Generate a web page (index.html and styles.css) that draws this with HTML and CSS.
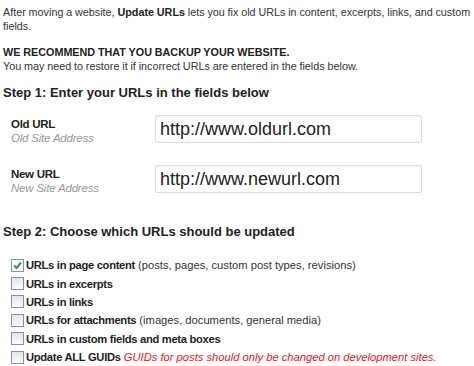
FILE: index.html
```html
<!DOCTYPE HTML>
<html lang="en">
<head>
    <title>Update URLs</title>
    <link rel="stylesheet" href="styles.css">
</head>
<body>

<div class="wrap">
    <p class="intro">After moving a website, <b>Update URLs</b> lets you fix old URLs in content, excerpts, links, and custom fields.</p>
    <p class="intro"><b>WE RECOMMEND THAT YOU BACKUP YOUR WEBSITE.</b><br>You may need to restore it if incorrect URLs are entered in the fields below.</p>

    <h3 class="step-title">Step 1: Enter your URLs in the fields below</h3>
    <div class="url-fields">
        <div class="url-row">
            <label class="url-label" for="oldurl">
                <strong>Old URL</strong>
                <em>Old Site Address</em>
            </label>
            <input type="text" id="oldurl" class="url-input" value="http://www.oldurl.com">
        </div>
        <div class="url-row">
            <label class="url-label" for="newurl">
                <strong>New URL</strong>
                <em>New Site Address</em>
            </label>
            <input type="text" id="newurl" class="url-input" value="http://www.newurl.com">
        </div>
    </div>

    <h3 class="step-title step-two">Step 2: Choose which URLs should be updated</h3>
    <ul class="options">
        <li class="option">
            <span class="check-box checked">
                <svg width="11" height="11" viewBox="0 0 11 11"><polyline points="2,5.5 4.5,8 9,2.5" fill="none" stroke="#2e9c2e" stroke-width="2"/></svg>
            </span>
            <span class="option-text"><strong>URLs in page content</strong> (posts, pages, custom post types, revisions)</span>
        </li>
        <li class="option">
            <span class="check-box"></span>
            <span class="option-text"><strong>URLs in excerpts</strong></span>
        </li>
        <li class="option">
            <span class="check-box"></span>
            <span class="option-text"><strong>URLs in links</strong></span>
        </li>
        <li class="option">
            <span class="check-box"></span>
            <span class="option-text"><strong>URLs for attachments</strong> (images, documents, general media)</span>
        </li>
        <li class="option">
            <span class="check-box"></span>
            <span class="option-text"><strong>URLs in custom fields and meta boxes</strong></span>
        </li>
        <li class="option">
            <span class="check-box"></span>
            <span class="option-text"><strong>Update ALL GUIDs</strong> <em class="warning">GUIDs for posts should only be changed on development sites.</em></span>
        </li>
    </ul>
</div>

</body>
</html>
```

FILE: styles.css
```css
body {
    margin: 0;
    background-color: #fff;
    color: #333;
    font-family: 'Liberation Sans', Arial, sans-serif;
}

.wrap {
    padding: 5px 0 0 3px;
}

strong {
    letter-spacing: -0.3px;
    color: #222;
}

.intro {
    font-size: 10.8px;
    line-height: 14px;
    word-spacing: -0.2px;
    margin: 0 0 12px;
}

.intro b {
    color: #222;
}

.step-title {
    font-size: 13px;
    line-height: 16px;
    font-weight: bold;
    color: #222;
    margin: 1px 0 14px;
}

.step-two {
    margin: 29px 0 16px;
}

/* URL fields */
.url-fields {
    display: flex;
    flex-direction: column;
    gap: 20px;
}

.url-row {
    display: flex;
    align-items: flex-start;
}

.url-label {
    width: 144px;
    padding: 2px 0 0 8px;
    font-size: 11.5px;
    line-height: 14px;
    display: flex;
    flex-direction: column;
}

.url-label em {
    color: #999;
    letter-spacing: -0.2px;
}

.url-input {
    box-sizing: border-box;
    width: 267px;
    height: 28px;
    margin: 0;
    padding: 0 4px;
    border: 1px solid #dcdcdc;
    border-radius: 2px;
    box-shadow: inset 0 1px 2px rgba(0, 0, 0, 0.05);
    font-family: 'Liberation Sans', Arial, sans-serif;
    font-size: 18px;
    color: #222;
    background-color: #fff;
    outline: none;
}

/* Checkbox list */
.options {
    list-style: none;
    margin: 0;
    padding: 0 0 0 8px;
}

.option {
    display: flex;
    align-items: center;
    gap: 2px;
    height: 18.4px;
    font-size: 11.2px;
    white-space: nowrap;
}

.check-box {
    box-sizing: border-box;
    width: 13px;
    height: 13px;
    flex-shrink: 0;
    border: 1px solid #8193ab;
    background: linear-gradient(#e4e6ea, #fbfbfc);
    display: flex;
    align-items: center;
    justify-content: center;
}

.check-box.checked {
    background: #fff;
}

.warning {
    color: #e8121c;
}
```
